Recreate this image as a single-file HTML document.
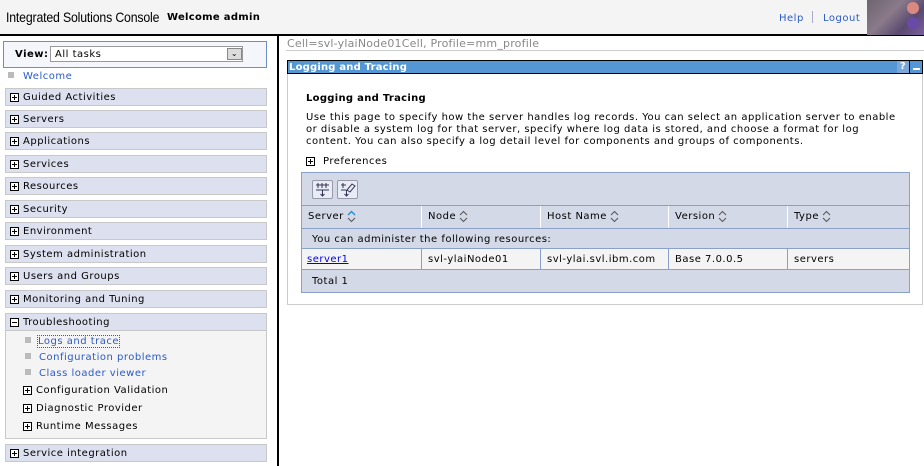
<!DOCTYPE html>
<html><head><style>
*{margin:0;padding:0;box-sizing:border-box}
body{width:924px;height:466px;position:relative;background:#fff;font-family:"DejaVu Sans",Verdana,sans-serif;font-size:10px;color:#000;overflow:hidden;letter-spacing:.5px}
.a{position:absolute;white-space:nowrap}
.hdr{left:0;top:0;width:924px;height:36px;background:#f4f4f4;border-bottom:2px solid #000}
.nav{left:5px;width:262px;height:18px;background:#dde0ef;border:1px solid #c8c8c8;line-height:17px;padding-left:17px}
.pl{position:absolute;width:9px;height:9px;border:1px solid #000;background:#fff}
.pl:before{content:"";position:absolute;left:1px;top:3px;width:5px;height:1px;background:#000}
.pl.p:after{content:"";position:absolute;left:3px;top:1px;width:1px;height:5px;background:#000}
.nav .pl{left:4px;top:4px}
.lk{color:#2a5bc8}
.sq{position:absolute;width:6px;height:6px;background:#bbb}
.c{position:absolute;border-right:1px solid #fff;height:100%;padding-left:6px}
.s{display:inline-block;vertical-align:middle;margin-left:3px}
</style></head><body>
<div class="a hdr"></div>
<div class="a" style="left:6px;top:9px;font-family:'Liberation Sans',sans-serif;font-size:14px;transform:scaleX(.88);transform-origin:left;letter-spacing:-.2px">Integrated Solutions Console</div>
<div class="a" style="left:167px;top:12px;font-weight:bold;font-size:10px;letter-spacing:.3px">Welcome admin</div>
<div class="a lk" style="left:779px;top:13px">Help</div>
<div class="a" style="left:812px;top:11px;width:1px;height:12px;background:#aac"></div>
<div class="a lk" style="left:823px;top:13px">Logout</div>
<div class="a" style="left:867px;top:0;width:57px;height:35px;background:linear-gradient(135deg,#6e6470,#8a7a8a 40%,#5a4a70 70%,#7a60a0);"></div>
<div class="a" style="left:907px;top:2px;width:12px;height:12px;border-radius:6px;background:#d98a80"></div>
<div class="a" style="left:907px;top:17px;width:12px;height:12px;border-radius:6px;background:#6a4aa8"></div>
<div class="a" style="left:277px;top:36px;width:2px;height:430px;background:#000"></div>

<div class="a" style="left:3px;top:41px;width:264px;height:27px;border:1px solid #6a8fc6;background:#f4f6fb"></div>
<div class="a" style="left:15px;top:49px;font-weight:bold">View:</div>
<div class="a" style="left:50px;top:46px;width:193px;height:16px;border:1px solid #999;background:#fff;padding-left:4px;line-height:15px">All tasks</div>
<div class="a" style="left:227px;top:48px;width:15px;height:12px;background:#dcdcdc;border:1px solid #888;font-size:8px;text-align:center;line-height:10px">&#8964;</div>
<div class="sq" style="left:8px;top:72px"></div>
<div class="a lk" style="left:23px;top:71px">Welcome</div>

<div class="a nav" style="top:88px"><span class="pl p"></span>Guided Activities</div>
<div class="a nav" style="top:110px"><span class="pl p"></span>Servers</div>
<div class="a nav" style="top:132px"><span class="pl p"></span>Applications</div>
<div class="a nav" style="top:155px"><span class="pl p"></span>Services</div>
<div class="a nav" style="top:177px"><span class="pl p"></span>Resources</div>
<div class="a nav" style="top:200px"><span class="pl p"></span>Security</div>
<div class="a nav" style="top:222px"><span class="pl p"></span>Environment</div>
<div class="a nav" style="top:245px"><span class="pl p"></span>System administration</div>
<div class="a nav" style="top:267px"><span class="pl p"></span>Users and Groups</div>
<div class="a nav" style="top:290px"><span class="pl p"></span>Monitoring and Tuning</div>
<div class="a" style="left:5px;top:313px;width:262px;height:126px;background:#f4f4f4;border:1px solid #c8c8c8"></div>
<div class="a nav" style="top:313px"><span class="pl"></span>Troubleshooting</div>
<div class="sq" style="left:25px;top:337px"></div>
<div class="a lk" style="left:38px;top:336px;outline:1px dotted #2a5bc8">Logs and trace</div>
<div class="sq" style="left:25px;top:353px"></div>
<div class="a lk" style="left:39px;top:352px">Configuration problems</div>
<div class="sq" style="left:25px;top:369px"></div>
<div class="a lk" style="left:39px;top:368px">Class loader viewer</div>
<span class="pl p" style="left:23px;top:386px"></span><div class="a" style="left:36px;top:385px">Configuration Validation</div>
<span class="pl p" style="left:23px;top:404px"></span><div class="a" style="left:36px;top:403px">Diagnostic Provider</div>
<span class="pl p" style="left:23px;top:422px"></span><div class="a" style="left:36px;top:421px">Runtime Messages</div>
<div class="a nav" style="top:444px"><span class="pl p"></span>Service integration</div>

<div class="a" style="left:287px;top:37px;color:#888;font-size:11px;letter-spacing:.2px">Cell=svl-ylaiNode01Cell, Profile=mm_profile</div>
<div class="a" style="left:286px;top:50px;width:638px;height:1px;background:#ccc"></div>
<div class="a" style="left:287px;top:60px;width:636px;height:245px;border:1px solid #ccc;border-top:none"></div>
<div class="a" style="left:287px;top:60px;width:636px;height:14px;background:#5596d4;border:1px solid #000;color:#fff;font-weight:bold;line-height:13px;padding-left:1px;letter-spacing:.2px">Logging and Tracing</div>
<div class="a" style="left:897px;top:61px;width:12px;height:12px;background:#7aa8dc;color:#fff;font-weight:bold;text-align:center;line-height:12px">?</div>
<div class="a" style="left:909px;top:60px;width:1px;height:14px;background:#000"></div>
<div class="a" style="left:911px;top:61px;width:11px;height:12px;background:#5596d4"><div style="margin:7px 2px 0;height:2px;background:#fff"></div></div>
<div class="a" style="left:306px;top:93px;font-weight:bold;letter-spacing:.3px">Logging and Tracing</div>
<div class="a" style="left:306px;top:112px;line-height:12px">Use this page to specify how the server handles log records. You can select an application server to enable<br>or disable a system log for that server, specify where log data is stored, and choose a format for log<br>content. You can also specify a log detail level for components and groups of components.</div>
<span class="pl p" style="left:306px;top:157px"></span><div class="a" style="left:323px;top:156px">Preferences</div>

<div class="a" style="left:301px;top:172px;width:609px;height:121px;background:#d3d9e6;border:1px solid #8aa0c8"></div>
<div class="a" style="left:312px;top:180px;width:21px;height:19px;border:1px solid #99a;background:#e8ecf4;border-radius:2px"><svg width="19" height="17"><path d="M3 4h13M5 2v5M9 2v5M13 2v5M3 9h13M9.5 9v6M7.5 13l2 2 2-2" stroke="#335" fill="none" stroke-width="1"/></svg></div>
<div class="a" style="left:337px;top:180px;width:21px;height:19px;border:1px solid #99a;background:#e8ecf4;border-radius:2px"><svg width="19" height="17"><path d="M3 4h5M5 2v5M3 9h5M9 9l5-6 3 2-5 6zM8.5 9v6M6.5 13l2 2 2-2" stroke="#335" fill="none" stroke-width="1"/></svg></div>
<div class="a" style="left:301px;top:205px;width:609px;height:1px;background:#8aa0c8"></div>
<div class="a" style="left:302px;top:206px;width:607px;height:22px;line-height:22px">
<div class="c" style="left:0;width:120px">Server<svg class="s" width="9" height="13"><path d="M1 5l3.5-3.5L8 5" stroke="#28c" fill="none" stroke-width="1.3"/><path d="M1 8l3.5 3.5L8 8" stroke="#555" fill="none"/></svg></div>
<div class="c" style="left:120px;width:119px">Node<svg class="s" width="9" height="13"><path d="M1 5l3.5-3.5L8 5M1 8l3.5 3.5L8 8" stroke="#555" fill="none"/></svg></div>
<div class="c" style="left:239px;width:128px">Host Name<svg class="s" width="9" height="13"><path d="M1 5l3.5-3.5L8 5M1 8l3.5 3.5L8 8" stroke="#555" fill="none"/></svg></div>
<div class="c" style="left:367px;width:119px">Version<svg class="s" width="9" height="13"><path d="M1 5l3.5-3.5L8 5M1 8l3.5 3.5L8 8" stroke="#555" fill="none"/></svg></div>
<div class="c" style="left:486px;width:121px;border:none">Type<svg class="s" width="9" height="13"><path d="M1 5l3.5-3.5L8 5M1 8l3.5 3.5L8 8" stroke="#555" fill="none"/></svg></div>
</div>
<div class="a" style="left:301px;top:228px;width:609px;height:1px;background:#8aa0c8"></div>
<div class="a" style="left:312px;top:234px">You can administer the following resources:</div>
<div class="a" style="left:301px;top:248px;width:609px;height:1px;background:#8aa0c8"></div>
<div class="a" style="left:302px;top:249px;width:607px;height:20px;background:#f4f4f4;line-height:21px">
<div class="c" style="left:0;width:120px;border-color:#8aa0c8;padding-left:5px"><span style="color:#00e;text-decoration:underline">server1</span></div>
<div class="c" style="left:120px;width:119px;border-color:#8aa0c8">svl-ylaiNode01</div>
<div class="c" style="left:239px;width:128px;border-color:#8aa0c8">svl-ylai.svl.ibm.com</div>
<div class="c" style="left:367px;width:119px;border-color:#8aa0c8">Base 7.0.0.5</div>
<div class="c" style="left:486px;width:121px;border:none">servers</div>
</div>
<div class="a" style="left:301px;top:269px;width:609px;height:1px;background:#8aa0c8"></div>
<div class="a" style="left:312px;top:276px">Total 1</div>
</body></html>
